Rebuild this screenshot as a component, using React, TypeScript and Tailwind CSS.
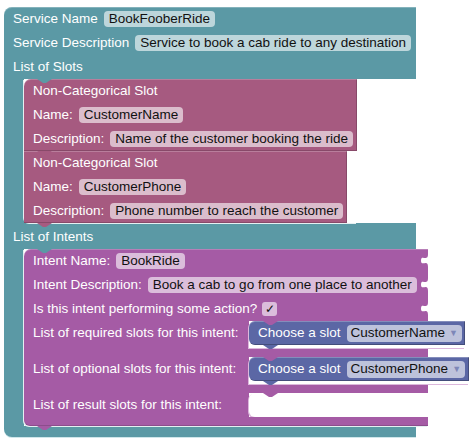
import React from "react";

const TealField = ({ children }: { children: React.ReactNode }) => (
  <span className="inline-flex shrink-0 items-center h-[16px] px-[5px] rounded-[4px] text-[#111] leading-none bg-[#bdd6db]">{children}</span>
);
const PinkField = ({ children }: { children: React.ReactNode }) => (
  <span className="inline-flex shrink-0 items-center h-[16px] px-[5px] rounded-[4px] text-[#111] leading-none bg-[#dbbdcc]">{children}</span>
);
const PurpleField = ({ children }: { children: React.ReactNode }) => (
  <span className="inline-flex shrink-0 items-center h-[16px] px-[5px] rounded-[4px] text-[#111] leading-none bg-[#dbbddb]">{children}</span>
);

const Notch = ({ color, className }: { color: string; className: string }) => (
  <svg className={`absolute ${className}`} width="15" height="4" viewBox="0 0 15 4">
    <polygon points="0,0 6,4 9,4 15,0" fill={color} />
  </svg>
);

const PuzzleNotch = () => (
  <svg className="absolute right-0 top-[5px]" width="7" height="13" viewBox="0 0 8 15" preserveAspectRatio="none">
    <path d="M8.5 0 L8 0 C8 10 0 -0.5 0 7.5 C0 15.5 8 5 8 15 L8.5 15 Z" fill="#ffffff" />
  </svg>
);

const SlotBlock = ({ width, name, desc, first, last }: { width: string; name: string; desc: string; first?: boolean; last?: boolean }) => (
  <div className={`relative shrink-0 bg-[#a65a80] pl-[9px] flex flex-col shadow-[inset_0_1px_0_rgba(255,255,255,0.22),inset_-1px_-1px_0_rgba(0,0,0,0.18)] ${width} ${first ? "rounded-tl-[7px]" : ""}`}>
    <Notch color={first ? "#5b99a5" : "#a65a80"} className="top-0 left-[13px]" />
    <div className="h-[24px] flex items-center">Non-Categorical Slot</div>
    <div className="h-[24px] flex items-center gap-[6px]">
      <span>Name:</span>
      <PinkField>{name}</PinkField>
    </div>
    <div className="h-[24px] flex items-center gap-[6px]">
      <span>Description:</span>
      <PinkField>{desc}</PinkField>
    </div>
    {last && <Notch color="#a65a80" className="bottom-[-4px] left-[13px]" />}
  </div>
);

const ChooseSlot = ({ value, width }: { value: string; width: string }) => (
  <div className={`relative shrink-0 h-[24px] bg-[#5b67a5] rounded-l-[6px] flex items-center pl-[9px] gap-[6px] shadow-[inset_0_1px_0_rgba(255,255,255,0.25),inset_-1px_-1px_0_rgba(0,0,0,0.25)] ${width}`}>
    <Notch color="#a55ba5" className="top-0 left-[14px]" />
    <span>Choose a slot</span>
    <span className="inline-flex shrink-0 items-center h-[17px] pl-[4px] pr-[4px] rounded-[4px] text-[#111] leading-none bg-[#bdc2db] gap-[4px]">
      {value}
      <span className="text-[#7d87b8] text-[9px]">▼</span>
    </span>
    <Notch color="#5b67a5" className="bottom-[-4px] left-[14px]" />
  </div>
);

export default function App() {
  return (
    <div className="w-[474px] h-[439px] bg-white overflow-hidden pt-[7px] pl-[4px] text-white text-[13.5px] whitespace-nowrap font-['Liberation_Sans',Arial,sans-serif]">
      <div className="flex flex-col">
        {/* header */}
        <div className="w-[412px] h-[72px] bg-[#5b99a5] rounded-tl-[8px] pl-[9px] flex flex-col shadow-[inset_0_1px_0_rgba(255,255,255,0.25)]">
          <div className="h-[24px] flex items-center gap-[6px]">
            <span>Service Name</span>
            <TealField>BookFooberRide</TealField>
          </div>
          <div className="h-[24px] flex items-center gap-[6px]">
            <span>Service Description</span>
            <TealField>Service to book a cab ride to any destination</TealField>
          </div>
          <div className="h-[24px] flex items-center">List of Slots</div>
        </div>

        {/* slots statement */}
        <div className="flex">
          <div className="w-[20px] shrink-0 bg-[#5b99a5]" />
          <div className="relative flex flex-col items-start rounded-bl-[6px] shadow-[-1px_1px_0_#e4f0f2]">
            <SlotBlock width="w-[333px]" name="CustomerName" desc="Name of the customer booking the ride" first />
            <SlotBlock width="w-[323px]" name="CustomerPhone" desc="Phone number to reach the customer" last />
          </div>
        </div>

        {/* list of intents row */}
        <div className="w-[412px] h-[26px] bg-[#5b99a5] pl-[9px] pt-[3px] flex items-center">List of Intents</div>

        {/* intents statement */}
        <div className="flex">
          <div className="w-[20px] shrink-0 bg-[#5b99a5]" />
          <div className="relative flex flex-col rounded-bl-[6px] shadow-[-1px_1px_0_#e4f0f2]">
            <div className="relative w-[404px] flex flex-col">
              <Notch color="#5b99a5" className="top-0 left-[13px] z-10" />
              <div className="relative h-[24px] bg-[#a55ba5] rounded-tl-[7px] pl-[9px] flex items-center gap-[6px] shadow-[inset_0_1px_0_rgba(255,255,255,0.22)]">
                <span>Intent Name:</span>
                <PurpleField>BookRide</PurpleField>
                <PuzzleNotch />
              </div>
              <div className="relative h-[24px] bg-[#a55ba5] pl-[9px] flex items-center gap-[6px]">
                <span>Intent Description:</span>
                <PurpleField>Book a cab to go from one place to another</PurpleField>
                <PuzzleNotch />
              </div>
              <div className="relative h-[24px] bg-[#a55ba5] pl-[9px] flex items-center gap-[5px]">
                <span>Is this intent performing some action?</span>
                <span className="inline-flex items-center justify-center w-[15px] h-[14px] rounded-[3px] bg-[#dbbddb] text-[#111] text-[12px] leading-none">✓</span>
                <PuzzleNotch />
              </div>

              {/* required */}
              <div className="flex h-[27px]">
                <div className="w-[225px] shrink-0 bg-[#a55ba5] pl-[9px] h-[27px]">
                  <div className="h-[24px] flex items-center">List of required slots for this intent:</div>
                </div>
                <div className="relative shrink-0 rounded-tl-[6px] shadow-[-1px_1px_0_#dcb8dc]">
                  <ChooseSlot value="CustomerName" width="w-[216px]" />
                </div>
              </div>
              <div className="w-[404px] h-[9px] bg-[#a55ba5]" />

              {/* optional */}
              <div className="flex h-[27px]">
                <div className="w-[225px] shrink-0 bg-[#a55ba5] pl-[9px] h-[27px]">
                  <div className="h-[24px] flex items-center">List of optional slots for this intent:</div>
                </div>
                <div className="relative shrink-0 rounded-tl-[6px] shadow-[-1px_1px_0_#dcb8dc]">
                  <ChooseSlot value="CustomerPhone" width="w-[220px]" />
                </div>
              </div>
              <div className="w-[404px] h-[9px] bg-[#a55ba5]" />

              {/* result */}
              <div className="flex h-[24px]">
                <div className="w-[225px] shrink-0 bg-[#a55ba5] pl-[9px] h-[24px] flex items-center">List of result slots for this intent:</div>
                <div className="relative shrink-0 w-[179px] h-[24px] bg-white rounded-l-[6px] shadow-[-1px_1px_0_#dcb8dc]">
                  <Notch color="#a55ba5" className="top-0 left-[14px]" />
                </div>
              </div>
              <div className="relative w-[404px] h-[9px] bg-[#a55ba5] rounded-bl-[6px] shadow-[inset_0_-1px_0_rgba(0,0,0,0.15)]">
                <Notch color="#a55ba5" className="bottom-[-4px] left-[13px]" />
              </div>
            </div>
          </div>
        </div>

        {/* bottom bar */}
        <div className="w-[412px] h-[11px] bg-[#5b99a5] rounded-bl-[8px] shadow-[0_1px_0_#cfe6ea]" />
      </div>
    </div>
  );
}
